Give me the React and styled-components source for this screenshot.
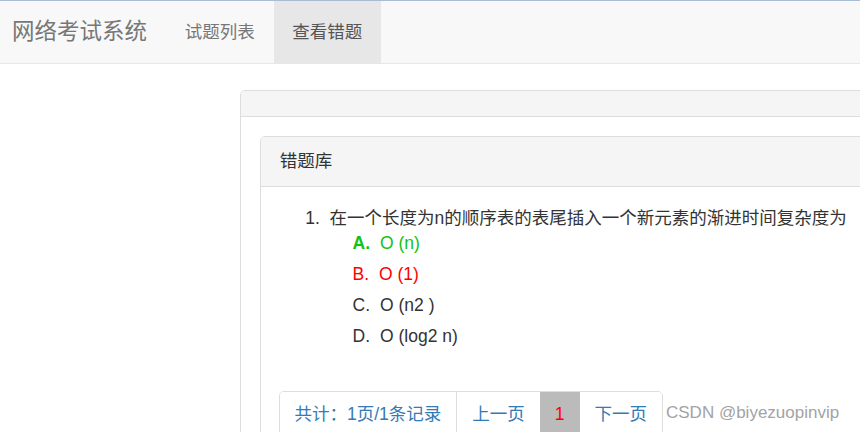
import React from 'react'
import styled, { createGlobalStyle } from 'styled-components'

const GlobalStyle = createGlobalStyle`
  html, body {
    margin: 0;
    padding: 0;
    background: #fff;
    overflow: hidden;
  }
  body {
    font-family: "Liberation Sans", "Noto Sans CJK SC", sans-serif;
    font-size: 17.5px;
    line-height: 1.42857;
    color: #333;
  }
  * {
    box-sizing: border-box;
  }
`

const Page = styled.div`
  position: relative;
  width: 860px;
  height: 432px;
  overflow: hidden;
  border-top: 1px solid #a9bcd5;
`

const Navbar = styled.nav`
  display: flex;
  align-items: stretch;
  height: 63px;
  background: #f8f8f8;
  border-bottom: 1px solid #e7e7e7;
`

const Brand = styled.a`
  display: flex;
  align-items: center;
  padding: 0 19px 0 12px;
  font-size: 22.5px;
  color: #777;
  text-decoration: none;
`

const NavItem = styled.a`
  display: flex;
  align-items: center;
  padding: 0 18.75px;
  font-size: 17.5px;
  color: ${(props) => (props.active ? '#555' : '#777')};
  background: ${(props) => (props.active ? '#e7e7e7' : 'transparent')};
  text-decoration: none;
`

const Main = styled.div`
  padding: 26px 0 0 240px;
`

const Panel = styled.div`
  width: ${(props) => props.width}px;
  background: #fff;
  border: 1px solid #ddd;
  border-radius: 5px;
`

const PanelHeading = styled.div`
  min-height: 26px;
  padding: 12px 19px;
  background: #f5f5f5;
  border-bottom: 1px solid #ddd;
  border-radius: 4px 4px 0 0;
  font-size: 17.5px;
  line-height: 25px;
  color: #333;
`

const PanelBody = styled.div`
  padding: 19px 18.75px;
`

const QuestionList = styled.ol`
  margin: 0;
  padding-left: 50px;
  line-height: 25px;
  & > li::marker {
    content: counter(list-item) ".  ";
  }
`

const Options = styled.div`
  display: flex;
  flex-direction: column;
  gap: 6px;
  padding-left: 23px;
`

const Option = styled.div`
  display: flex;
  gap: 10px;
  color: ${(props) =>
    props.status === 'right' ? '#12c312' : props.status === 'wrong' ? '#f00' : '#333'};
`

const Letter = styled.span`
  font-weight: ${(props) => (props.bold ? 700 : 400)};
`

const Pagination = styled.ul`
  display: inline-flex;
  margin: 42px 0 0 -1px;
  padding: 0;
  list-style: none;
  border: 1px solid #ddd;
  border-radius: 5px;
  overflow: hidden;
`

const PageItem = styled.li`
  padding: 9.5px 15px;
  line-height: 25px;
  font-size: 17.5px;
  color: ${(props) => (props.active ? '#f00' : '#337ab7')};
  background: ${(props) => (props.active ? '#bbb' : '#fff')};
  border-left: ${(props) => (props.divider ? '1px solid #ddd' : 'none')};
`

const Watermark = styled.div`
  position: absolute;
  left: 666px;
  top: 400px;
  font-size: 17px;
  line-height: 24px;
  color: #a3a3a3;
  text-shadow: 0 0 2px #fff;
  white-space: nowrap;
`

const options = [
  { key: 'A', text: 'O (n)', status: 'right' },
  { key: 'B', text: 'O (1)', status: 'wrong' },
  { key: 'C', text: 'O (n2 )' },
  { key: 'D', text: 'O (log2 n)' },
]

export default function App() {
  return (
    <>
      <GlobalStyle />
      <Page>
        <Navbar>
          <Brand>网络考试系统</Brand>
          <NavItem>试题列表</NavItem>
          <NavItem active>查看错题</NavItem>
        </Navbar>
        <Main>
          <Panel width={720}>
            <PanelHeading />
            <PanelBody>
              <Panel width={700}>
                <PanelHeading>错题库</PanelHeading>
                <PanelBody>
                  <QuestionList>
                    <li>
                      在一个长度为n的顺序表的表尾插入一个新元素的渐进时间复杂度为
                      <Options>
                        {options.map((o) => (
                          <Option key={o.key} status={o.status}>
                            <Letter bold={o.status === 'right'}>{o.key}.</Letter>
                            <span>{o.text}</span>
                          </Option>
                        ))}
                      </Options>
                    </li>
                  </QuestionList>
                  <Pagination>
                    <PageItem>共计：1页/1条记录</PageItem>
                    <PageItem divider>上一页</PageItem>
                    <PageItem active>1</PageItem>
                    <PageItem>下一页</PageItem>
                  </Pagination>
                </PanelBody>
              </Panel>
            </PanelBody>
          </Panel>
        </Main>
        <Watermark>CSDN @biyezuopinvip</Watermark>
      </Page>
    </>
  )
}
